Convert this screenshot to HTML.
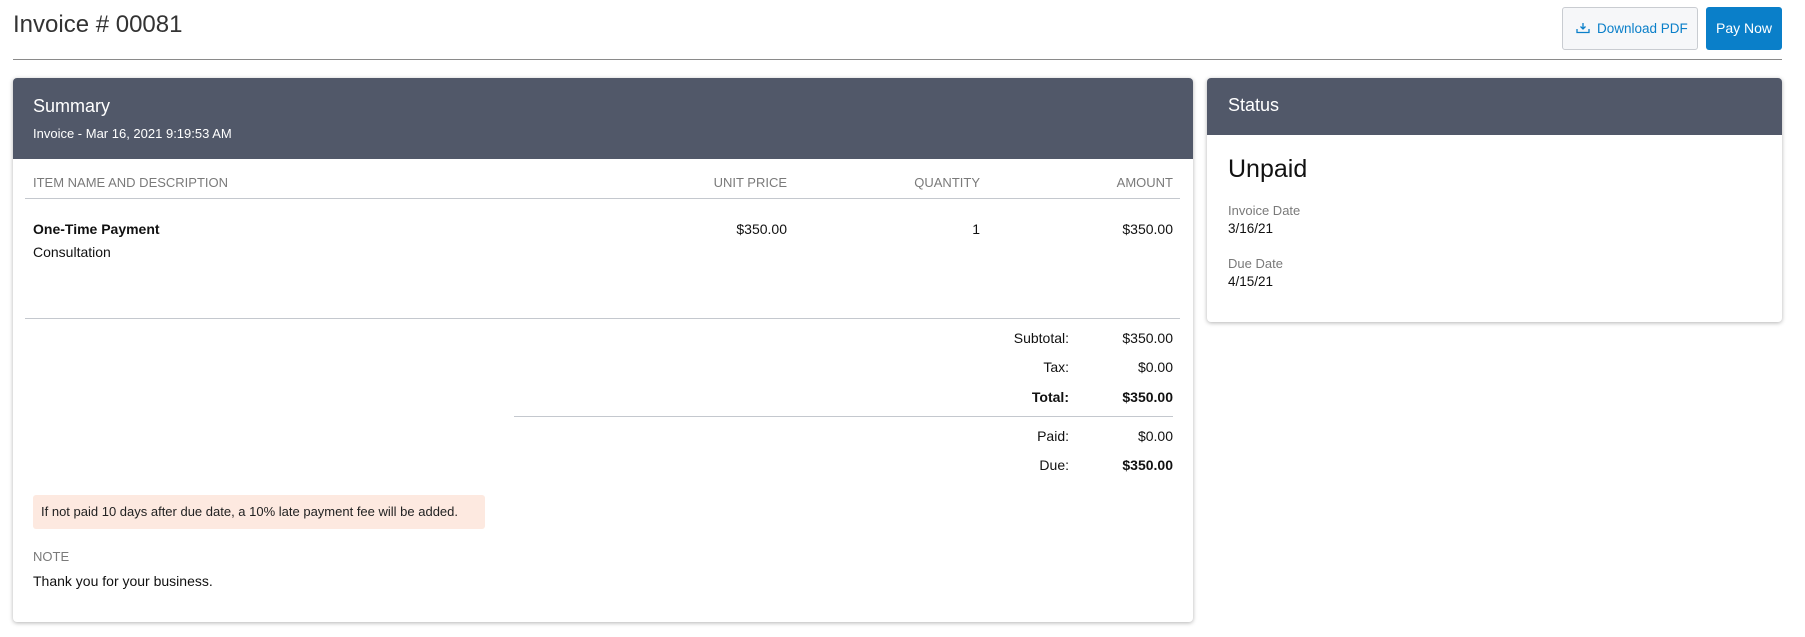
<!DOCTYPE html>
<html><head><meta charset="utf-8"><style>
*{box-sizing:border-box;margin:0;padding:0}
body{width:1805px;height:637px;background:#fff;font-family:"Liberation Sans",sans-serif;color:#111;position:relative;overflow:hidden;font-size:14px}
.a{position:absolute;white-space:nowrap}
.card{position:absolute;background:#fff;border-radius:4px;box-shadow:0 1px 4px rgba(0,0,0,.3);overflow:hidden}
.hd{background:#515869;color:#fff}
.gray{color:#7a7a7a}
.r{text-align:right}
.line{position:absolute;height:1px;background:#c4c8ce}
</style></head><body>
<div class="a" style="left:13px;top:11px;font-size:24px;color:#333">Invoice # 00081</div>
<div class="a" style="left:1562px;top:7px;width:136px;height:43px;border:1px solid #c9ccd1;border-radius:3px;background:#f6f7f9;color:#0a7fc9;font-size:13.5px;line-height:41px;padding-left:34px">Download PDF</div>
<svg class="a" style="left:1576px;top:22px" width="14" height="12" viewBox="0 0 14 12"><path d="M7 1v6M4.5 4.5L7 7l2.5-2.5M1 7v3.5h12V7" fill="none" stroke="#0a7fc9" stroke-width="1.3"/></svg>
<div class="a" style="left:1706px;top:7px;width:76px;height:43px;border-radius:3px;background:#0a7fc9;color:#fff;font-size:14px;line-height:43px;text-align:center">Pay Now</div>
<div class="line" style="left:13px;top:59px;width:1769px;background:#8a8a8a"></div>

<div class="card" style="left:13px;top:78px;width:1180px;height:544px">
 <div class="hd" style="height:81px;padding:18px 0 0 20px">
  <div style="font-size:18px">Summary</div>
  <div style="font-size:13px;margin-top:9px">Invoice - Mar 16, 2021 9:19:53 AM</div>
 </div>
</div>
<div class="a gray" style="left:33px;top:175px;font-size:13px">ITEM NAME AND DESCRIPTION</div>
<div class="a gray r" style="left:687px;width:100px;top:175px;font-size:13px">UNIT PRICE</div>
<div class="a gray r" style="left:880px;width:100px;top:175px;font-size:13px">QUANTITY</div>
<div class="a gray r" style="left:1073px;width:100px;top:175px;font-size:13px">AMOUNT</div>
<div class="line" style="left:25px;top:198px;width:1155px"></div>
<div class="a" style="left:33px;top:221px;font-weight:bold">One-Time Payment</div>
<div class="a" style="left:33px;top:244px">Consultation</div>
<div class="a r" style="left:687px;width:100px;top:221px">$350.00</div>
<div class="a r" style="left:880px;width:100px;top:221px">1</div>
<div class="a r" style="left:1073px;width:100px;top:221px">$350.00</div>
<div class="line" style="left:25px;top:318px;width:1155px"></div>

<div class="a r" style="left:969px;width:100px;top:330px">Subtotal:</div><div class="a r" style="left:1073px;width:100px;top:330px">$350.00</div>
<div class="a r" style="left:969px;width:100px;top:359px">Tax:</div><div class="a r" style="left:1073px;width:100px;top:359px">$0.00</div>
<div class="a r" style="left:969px;width:100px;top:389px;font-weight:bold">Total:</div><div class="a r" style="left:1073px;width:100px;top:389px;font-weight:bold">$350.00</div>
<div class="line" style="left:514px;top:416px;width:659px"></div>
<div class="a r" style="left:969px;width:100px;top:428px">Paid:</div><div class="a r" style="left:1073px;width:100px;top:428px">$0.00</div>
<div class="a r" style="left:969px;width:100px;top:457px">Due:</div><div class="a r" style="left:1073px;width:100px;top:457px;font-weight:bold">$350.00</div>

<div class="a" style="left:33px;top:495px;width:452px;height:34px;background:#fde9e0;border-radius:3px;padding-left:8px;line-height:34px;font-size:13px;color:#222">If not paid 10 days after due date, a 10% late payment fee will be added.</div>
<div class="a gray" style="left:33px;top:549px;font-size:13px">NOTE</div>
<div class="a" style="left:33px;top:573px">Thank you for your business.</div>

<div class="card" style="left:1207px;top:78px;width:575px;height:244px">
 <div class="hd" style="height:57px;padding:17px 0 0 21px;font-size:18px">Status</div>
</div>
<div class="a" style="left:1228px;top:155px;font-size:25px">Unpaid</div>
<div class="a gray" style="left:1228px;top:203px;font-size:13px">Invoice Date</div>
<div class="a" style="left:1228px;top:221px;font-size:13.5px">3/16/21</div>
<div class="a gray" style="left:1228px;top:256px;font-size:13px">Due Date</div>
<div class="a" style="left:1228px;top:274px;font-size:13.5px">4/15/21</div>
</body></html>
